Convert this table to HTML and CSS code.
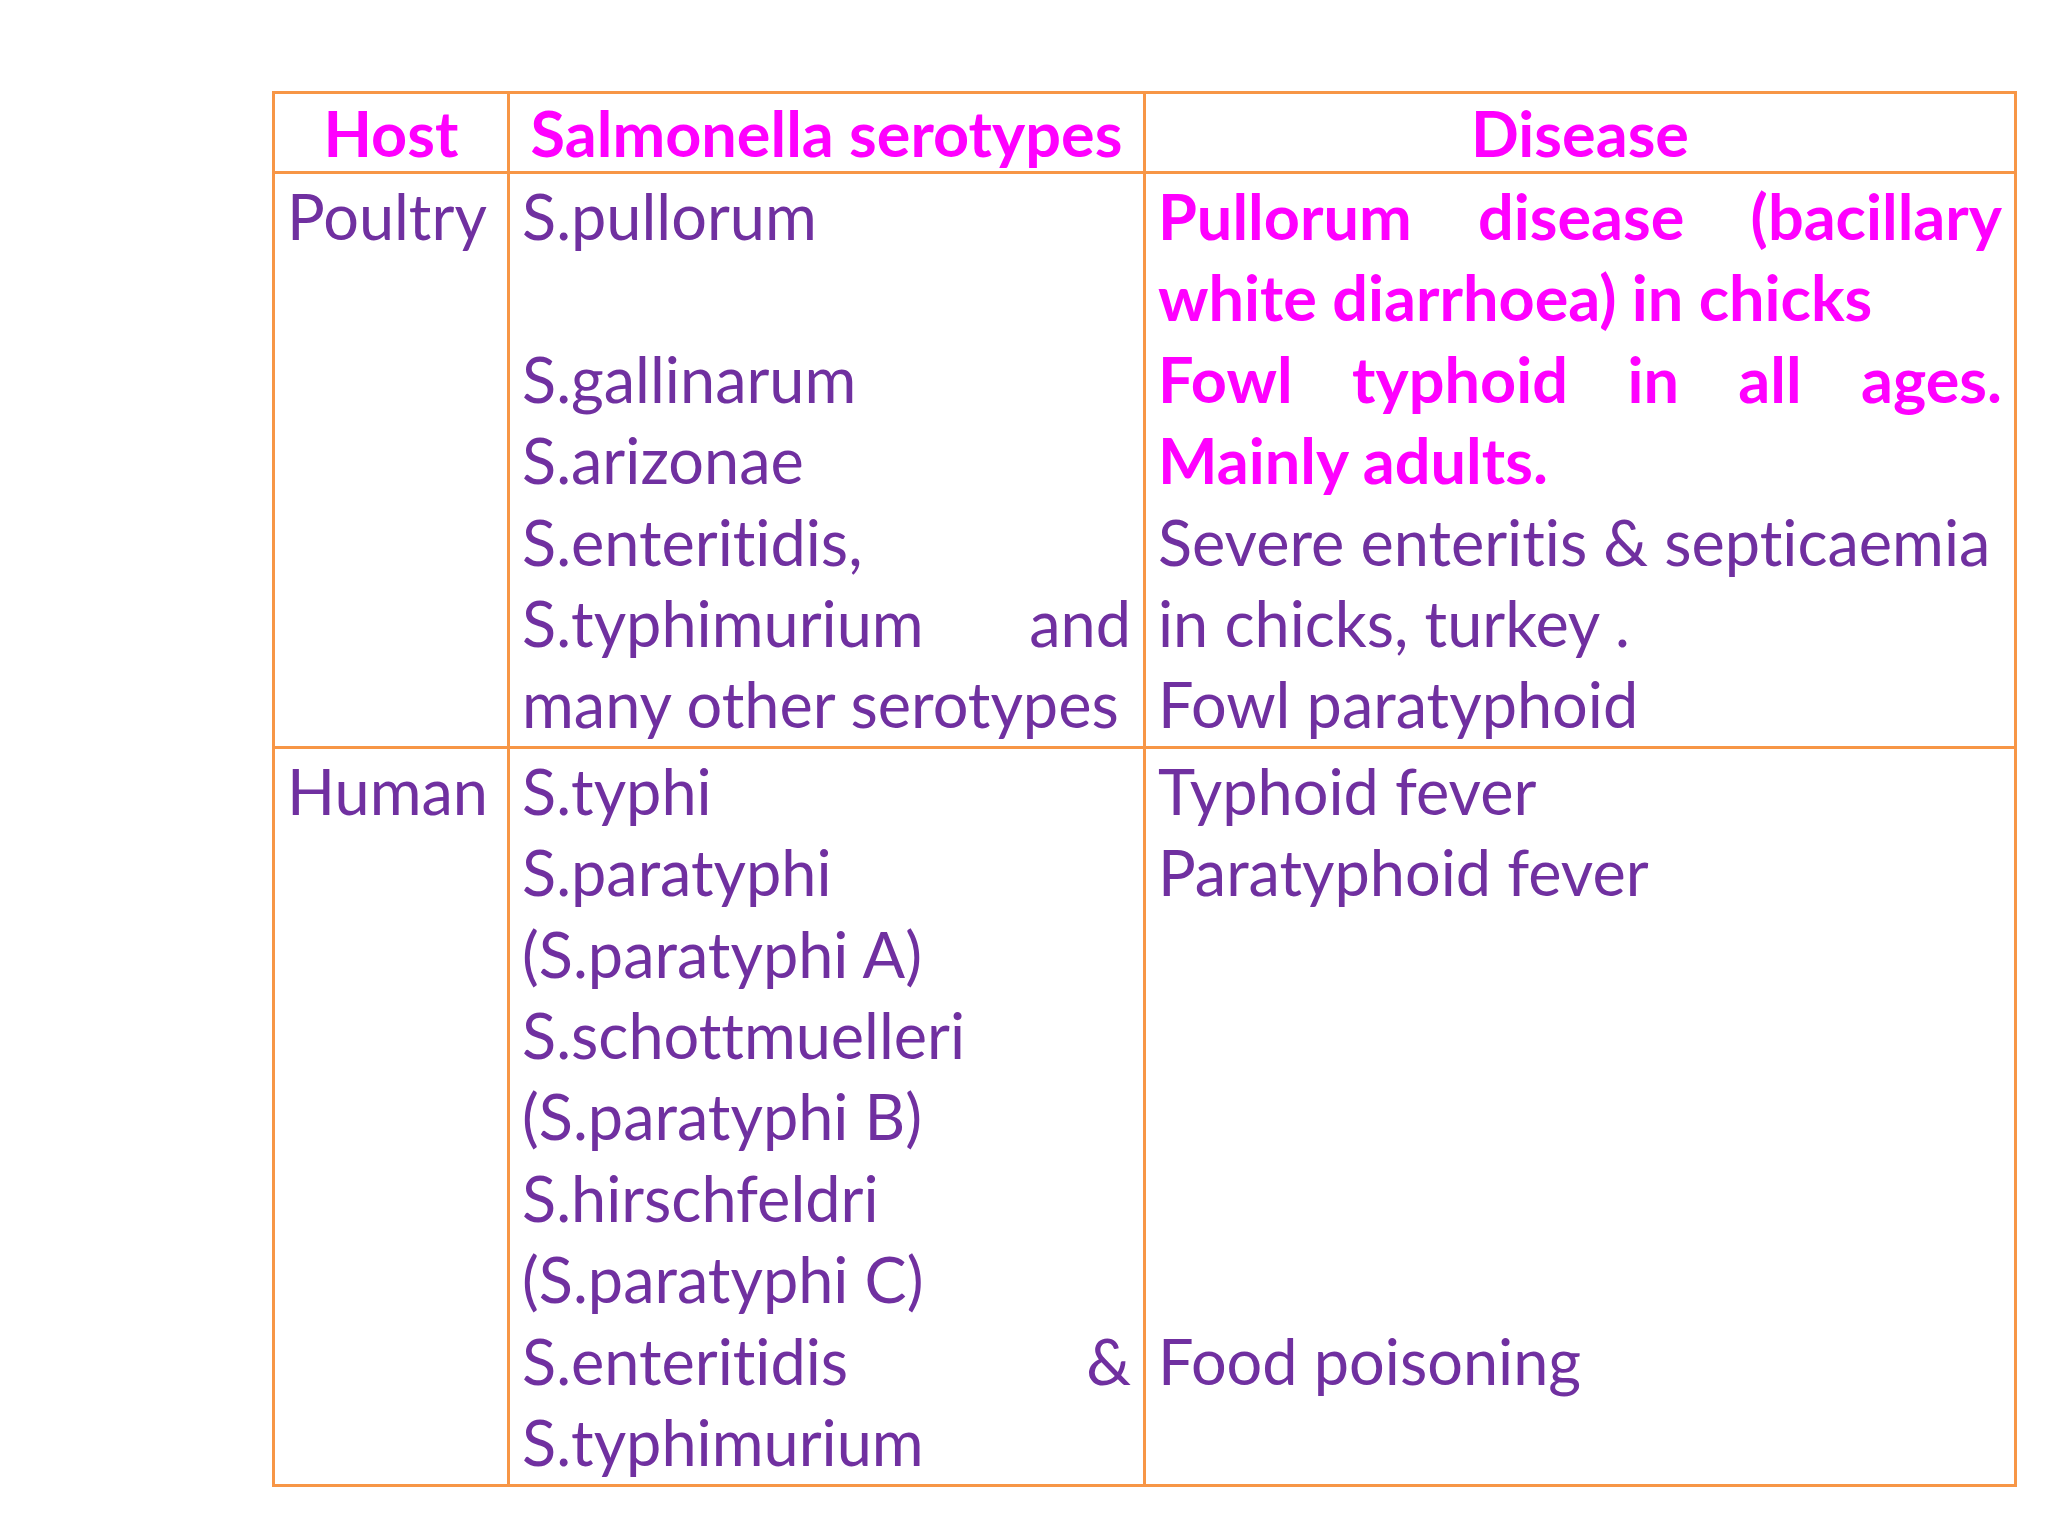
FILE: index.html
```html
<!DOCTYPE html>
<html>
<head>
<meta charset="utf-8">
<link rel="stylesheet" href="styles.css">
</head>
<body>
<div class="page">
<table class="grid">
  <colgroup>
    <col class="c-host">
    <col class="c-sero">
    <col class="c-dis">
  </colgroup>
  <tr class="head">
    <th>Host</th>
    <th>Salmonella serotypes</th>
    <th>Disease</th>
  </tr>
  <tr>
    <td><div class="ln">Poultry</div></td>
    <td>
      <div class="ln">S.pullorum</div>
      <div class="ln">&nbsp;</div>
      <div class="ln">S.gallinarum</div>
      <div class="ln">S.arizonae</div>
      <div class="ln">S.enteritidis,</div>
      <div class="ln j">S.typhimurium and</div>
      <div class="ln">many other serotypes</div>
    </td>
    <td>
      <div class="ln b j">Pullorum disease (bacillary</div>
      <div class="ln b">white diarrhoea) in chicks</div>
      <div class="ln b j">Fowl typhoid in all ages.</div>
      <div class="ln b">Mainly adults.</div>
      <div class="ln">Severe enteritis &amp; septicaemia</div>
      <div class="ln">in chicks, turkey .</div>
      <div class="ln">Fowl paratyphoid</div>
    </td>
  </tr>
  <tr>
    <td><div class="ln">Human</div></td>
    <td>
      <div class="ln">S.typhi</div>
      <div class="ln">S.paratyphi</div>
      <div class="ln">(S.paratyphi A)</div>
      <div class="ln">S.schottmuelleri</div>
      <div class="ln">(S.paratyphi B)</div>
      <div class="ln">S.hirschfeldri</div>
      <div class="ln">(S.paratyphi C)</div>
      <div class="ln j">S.enteritidis &amp;</div>
      <div class="ln">S.typhimurium</div>
    </td>
    <td>
      <div class="ln">Typhoid fever</div>
      <div class="ln">Paratyphoid fever</div>
      <div class="ln">&nbsp;</div>
      <div class="ln">&nbsp;</div>
      <div class="ln">&nbsp;</div>
      <div class="ln">&nbsp;</div>
      <div class="ln">&nbsp;</div>
      <div class="ln">Food poisoning</div>
      <div class="ln">&nbsp;</div>
    </td>
  </tr>
</table>
</div>
</body>
</html>
```

FILE: styles.css
```css
html, body {
  margin: 0;
  padding: 0;
  background: #ffffff;
}
.page {
  width: 2048px;
  height: 1536px;
  padding: 91px 0 0 272px;
  box-sizing: border-box;
  font-family: Lato, "Open Sans", sans-serif;
  font-variant-ligatures: none;
}
.grid {
  border-collapse: collapse;
  table-layout: fixed;
  width: 1742px;
}
.c-host { width: 235px; }
.c-sero { width: 636px; }
.c-dis { width: 871px; }
.grid th, .grid td {
  border: 3px solid #F79646;
  padding: 1px 12px;
  vertical-align: top;
  white-space: nowrap;
}
.grid th {
  color: #FF00FF;
  font-weight: 700;
  font-size: 63px;
  line-height: 75px;
  text-align: center;
}
.ln {
  font-size: 63px;
  line-height: 81.4px;
  color: #7030A0;
  text-align: left;
}
.ln.b {
  color: #FF00FF;
  font-weight: 700;
}
.ln.j {
  text-align: justify;
  text-align-last: justify;
}
```
